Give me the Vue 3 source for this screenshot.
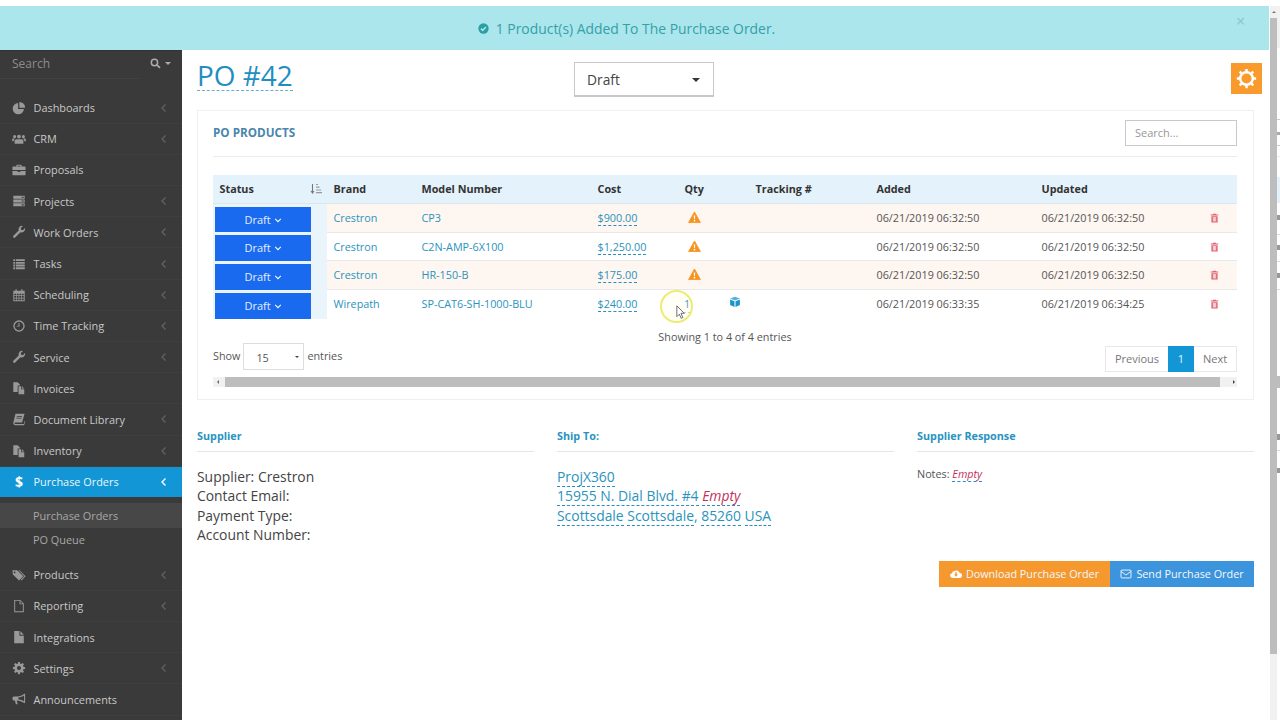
<script setup>
const icons = {
  pie: 'M7 2.4A6.4 6.4 0 1 0 13.6 9H7zM8.4 1A6.6 6.6 0 0 1 15 7.6H8.4z',
  users: 'M8 3a2.2 2.2 0 1 1 0 4.4A2.2 2.2 0 0 1 8 3zM3 3.4a1.8 1.8 0 1 1 0 3.6 1.8 1.8 0 0 1 0-3.6zM13 3.4a1.8 1.8 0 1 1 0 3.6 1.8 1.8 0 0 1 0-3.6zM5 8.2h6c1.2 0 2 .8 2 2.2V13.5H3v-3.1c0-1.4.8-2.2 2-2.2zM.2 8c0-.4.4-.6.8-.6h2.6C2.6 8 2 9 2 10.5H.2zM15.8 8c0-.4-.4-.6-.8-.6h-2.6c1 .6 1.6 1.6 1.6 3.1h1.8z',
  case: 'M5 4V2.6C5 2.2 5.4 2 5.8 2h4.4c.4 0 .8.2.8.6V4h3.5c.5 0 1 .5 1 1v3H.5V5c0-.5.5-1 1-1zM6.2 4h3.6V3H6.2zM.5 9h6v1.2h3V9h6v4c0 .5-.5 1-1 1h-13c-.5 0-1-.5-1-1z',
  server: 'M1.5 2h13v3.4h-13zM1.5 6.3h13v3.4h-13zM1.5 10.6h13V14h-13zM11 3v1.4h2.5V3zM11 7.3v1.4h2.5V7.3zM11 11.6V13h2.5v-1.4z',
  wrench: 'M15 4.5a4 4 0 0 1-5.3 3.8l-6.1 6.1a1.4 1.4 0 0 1-2-2l6.1-6.1A4 4 0 0 1 12.5 1L10 3.5l.5 2 2 .5 2.2-2.7c.2.4.3.8.3 1.2z',
  list: 'M1.5 2.5h2.2v2.2H1.5zM4.6 2.5h10v2.2h-10zM1.5 5.6h2.2v2.2H1.5zM4.6 5.6h10v2.2h-10zM1.5 8.7h2.2v2.2H1.5zM4.6 8.7h10v2.2h-10zM1.5 11.8h2.2V14H1.5zM4.6 11.8h10V14h-10z',
  calendar: 'M1.5 3H4V1.5h1.4V3h5.2V1.5H12V3h2.5v12h-13zM2.6 6.5v1.9h2.2V6.5zM5.6 6.5v1.9h2V6.5zM8.4 6.5v1.9h2V6.5zM11.2 6.5v1.9h2.2V6.5zM2.6 9.2v1.9h2.2V9.2zM5.6 9.2v1.9h2V9.2zM8.4 9.2v1.9h2V9.2zM11.2 9.2v1.9h2.2V9.2zM2.6 11.9v2h2.2v-2zM5.6 11.9v2h2v-2zM8.4 11.9v2h2v-2zM11.2 11.9v2h2.2v-2z',
  clock: 'M8 1.5a6.5 6.5 0 1 1 0 13 6.5 6.5 0 0 1 0-13zM8 3a5 5 0 1 0 0 10A5 5 0 0 0 8 3zM7.4 4.500h1.200v4.200H5.400V7.600h2z',
  files: 'M1.500 1.500h5L9 4v1.200H6.500V12.500h-5zM7.500 6h3v3.500H14V15H7.500zM11.400 6l2.600 2.600h-2.600z',
  book: 'M4 2h10.500l-.5 1.200L11.500 12H3.800c-.8 0-1 .6-.8 1s.5.6 1 .6h9.500l1-3.400.6.5-1.300 4.300H4c-1.800 0-2.800-1.300-2.500-3zM5.500 4.500v1h6v-1zM5 6.500v1h6v-1z',
  tags: 'M.5 2.500h5.400l7 7L8 14.400l-7-7zM3 4a1 1 0 1 0 0 2 1 1 0 0 0 0-2zM7.500 2.500h1l7 7-4.600 4.900-.9-.9 4-4z',
  fileo: 'M2.500 1h7l4 4v10h-11zM3.600 2.100v11.800h8.800V6H8.600V2.100zM9.700 2.400V5h2.600z',
  file: 'M2.500 1h6v5.500h5V15h-11zM9.600 1l3.900 4.400H9.600z',
  cog: 'M7 1h2l.3 2 1.200.5 1.700-1.200 1.500 1.500-1.200 1.700.5 1.200 2 .3v2l-2 .3-.5 1.200 1.200 1.700-1.500 1.500-1.700-1.200-1.200.5L9 15H7l-.3-2-1.200-.5-1.700 1.200-1.500-1.500 1.200-1.700-.5-1.200-2-.3V7l2-.3.5-1.200-1.200-1.700 1.500-1.500 1.700 1.200 1.200-.5zM8 5.700a2.300 2.300 0 1 0 0 4.600 2.300 2.300 0 0 0 0-4.600z',
  horn: 'M15 2v10.500l-1 .2C11 10.500 8 9.800 5.500 9.700l1 4.300H4.400L3.300 9.700H2.500C1.200 9.700.5 8.800.5 7.300S1.200 5 2.500 5H6c3 0 5.500-1 8-3zM13.800 4C12 5.300 9.800 6 7.400 6.100v2.600c2.400.1 4.600.8 6.400 2.100z'
}
const before = [
  ['Dashboards', 'pie', 1], ['CRM', 'users', 1], ['Proposals', 'case', 0], ['Projects', 'server', 1],
  ['Work Orders', 'wrench', 1], ['Tasks', 'list', 1], ['Scheduling', 'calendar', 1], ['Time Tracking', 'clock', 1],
  ['Service', 'wrench', 1], ['Invoices', 'files', 0], ['Document Library', 'book', 1], ['Inventory', 'files', 1]
]
const after = [
  ['Products', 'tags', 1], ['Reporting', 'fileo', 1], ['Integrations', 'file', 0], ['Settings', 'cog', 1], ['Announcements', 'horn', 0]
]
const rows = [
  { brand: 'Crestron', model: 'CP3', cost: '$900.00', added: '06/21/2019 06:32:50', updated: '06/21/2019 06:32:50', warn: true },
  { brand: 'Crestron', model: 'C2N-AMP-6X100', cost: '$1,250.00', added: '06/21/2019 06:32:50', updated: '06/21/2019 06:32:50', warn: true },
  { brand: 'Crestron', model: 'HR-150-B', cost: '$175.00', added: '06/21/2019 06:32:50', updated: '06/21/2019 06:32:50', warn: true },
  { brand: 'Wirepath', model: 'SP-CAT6-SH-1000-BLU', cost: '$240.00', added: '06/21/2019 06:33:35', updated: '06/21/2019 06:34:25', warn: false }
]
const columns = ['Brand', 'Model Number', 'Cost', 'Qty', 'Tracking #', 'Added', 'Updated', '']
// Clipped content of the page behind, visible in the last pixels at the right edge: [top, height, colour]
const edgeBits = [
  [6, 42, '#f2f2f2'], [119, 1, '#ccc'], [132, 3, '#aaa'], [145, 1, '#ccc'], [156, 1, '#eee'],
  [177, 26, '#e3f2fb'], [215, 5, '#999'], [234, 1, '#ddd'], [245, 5, '#999'], [261, 1, '#ddd'],
  [273, 5, '#999'], [289, 1, '#ddd'], [376, 12, '#bdbdbd'], [434, 6, '#999'], [450, 1, '#ddd'], [468, 5, '#999']
]
const edge = edgeBits.map((b, i) => ({
  height: b[1] + 'px',
  background: b[2],
  marginTop: b[0] - (i ? edgeBits[i - 1][0] + edgeBits[i - 1][1] : 6) + 'px'
}))
</script>

<template>
  <div class="page">
    <div class="alert">
      <svg class="alert-check" viewBox="0 0 16 16"><circle cx="8" cy="8" r="7.500" fill="#2a9fa6" /><path d="M4.400 8.200l2.500 2.500 4.600-4.800" fill="none" stroke="#aae6ec" stroke-width="2.200" /></svg>
      <span>1 Product(s) Added To The Purchase Order.</span>
      <span class="alert-close">×</span>
    </div>
    <div class="shell">
      <aside class="side">
        <div class="side-search">
          <span>Search</span>
          <span class="side-search-tools">
            <svg viewBox="0 0 16 16" class="search-ic"><circle cx="6.500" cy="6.500" r="4.600" fill="none" stroke="currentColor" stroke-width="2.200" /><path d="M10 10l4.500 4.500" stroke="currentColor" stroke-width="2.600" /></svg>
            <i class="caret-small"></i>
          </span>
        </div>
        <nav class="menu">
          <a v-for="m in before" :key="m[0]" class="item">
            <svg class="item-ic" viewBox="0 0 16 16"><path :d="icons[m[1]]" fill-rule="evenodd" /></svg>
            <span class="item-label">{{ m[0] }}</span>
            <svg v-if="m[2]" class="chev" viewBox="0 0 8 10"><path d="M5.500 1.500L2 5l3.500 3.500" fill="none" stroke="currentColor" stroke-width="1.100" /></svg>
          </a>
          <a class="item active">
            <span class="item-dollar">$</span>
            <span class="item-label">Purchase Orders</span>
            <svg class="chev" viewBox="0 0 8 10"><path d="M5.500 1.500L2 5l3.500 3.500" fill="none" stroke="currentColor" stroke-width="1.400" /></svg>
          </a>
          <div class="sub">
            <a class="sub-item current">Purchase Orders</a>
            <a class="sub-item">PO Queue</a>
          </div>
          <a v-for="m in after" :key="m[0]" class="item">
            <svg class="item-ic" viewBox="0 0 16 16"><path :d="icons[m[1]]" fill-rule="evenodd" /></svg>
            <span class="item-label">{{ m[0] }}</span>
            <svg v-if="m[2]" class="chev" viewBox="0 0 8 10"><path d="M5.500 1.500L2 5l3.500 3.500" fill="none" stroke="currentColor" stroke-width="1.100" /></svg>
          </a>
        </nav>
      </aside>

      <main class="main">
        <div class="head">
          <h1 class="title"><span class="title-text">PO #42</span></h1>
          <div class="status-select"><span>Draft</span><i class="caret"></i></div>
          <button class="gear">
            <svg viewBox="0 0 24 24">
              <g stroke="#fff" stroke-width="2.800">
                <path d="M12 1v4M12 19v4M1 12h4M19 12h4M4.200 4.200l2.900 2.900M16.900 16.900l2.900 2.900M4.200 19.800l2.900-2.900M16.900 7.100l2.900-2.900" />
              </g>
              <circle cx="12" cy="12" r="7.200" fill="none" stroke="#fff" stroke-width="2.800" />
            </svg>
          </button>
        </div>

        <section class="card">
          <div class="card-head">
            <h2>PO PRODUCTS</h2>
            <div class="search-box">Search...</div>
          </div>
          <table class="grid">
            <colgroup>
              <col class="c1" /><col class="c2" /><col class="c3" /><col class="c4" />
              <col class="c5" /><col class="c6" /><col class="c7" /><col class="c8" /><col class="c9" />
            </colgroup>
            <thead>
              <tr>
                <th class="sorted-head">
                  Status
                  <svg class="sort-ic" viewBox="0 0 12 12"><path d="M2.500 1v8.500M1 8l1.500 2L4 8" fill="none" stroke="#777" stroke-width="1.100" /><path d="M6 1.500h2M6 4.200h3.500M6 7h5M6 9.700h6" stroke="#999" stroke-width="1.200" /></svg>
                </th>
                <th v-for="c in columns" :key="c">{{ c }}</th>
              </tr>
            </thead>
            <tbody>
              <tr v-for="(r, i) in rows" :key="r.model" :class="{ odd: i % 2 === 0, tight: i === 1 }">
                <td class="status-cell"><div class="draft">Draft <svg viewBox="0 0 10 8"><path d="M1.500 2l3.500 3.500L8.500 2" fill="none" stroke="#fff" stroke-width="1.300" /></svg></div></td>
                <td class="link">{{ r.brand }}</td>
                <td class="link">{{ r.model }}</td>
                <td class="link"><span class="dash">{{ r.cost }}</span></td>
                <td class="qty">
                  <svg v-if="r.warn" class="warn" viewBox="0 0 16 16"><path d="M8 1.200l7.300 13H.7z" fill="#f5941f" stroke="#f5941f" stroke-linejoin="round" /><path d="M7.100 5.500h1.800l-.3 4.800H7.400zM7.100 11.200h1.800V13H7.100z" fill="#fff" /></svg>
                  <span v-else class="qty-num">1</span>
                </td>
                <td class="tracking">
                  <svg v-if="!r.warn" class="cube" viewBox="0 0 16 16"><path d="M8 1l6.500 2.400L8 6 1.500 3.400z" fill="#4fb4dc" /><path d="M1.500 4.700L7.300 7v7.600l-5.800-2.500z" fill="#1f93c8" /><path d="M14.500 4.700L8.700 7v7.600l5.800-2.500z" fill="#1f93c8" /></svg>
                </td>
                <td>{{ r.added }}</td>
                <td>{{ r.updated }}</td>
                <td class="del">
                  <svg viewBox="0 0 14 16"><path d="M5 1h4l1 1.500h3v1.300H1V2.500h3zM2 5h10v10H2zM4.400 6.500v7h1.200v-7zM6.400 6.500v7h1.200v-7zM8.400 6.500v7h1.200v-7z" fill="#e2606f" fill-rule="evenodd" /></svg>
                </td>
              </tr>
            </tbody>
          </table>
          <div class="info">Showing 1 to 4 of 4 entries</div>
          <div class="table-foot">
            <div class="length">
              <span class="length-text">Show</span>
              <div class="length-select"><span>15</span><i class="caret-tiny"></i></div>
              <span class="length-text">entries</span>
            </div>
            <div class="pager">
              <a class="prev">Previous</a><a class="on">1</a><a class="next">Next</a>
            </div>
          </div>
          <div class="hbar">
            <i class="arrow-left"></i>
            <div class="hbar-thumb"></div>
            <i class="arrow-right"></i>
          </div>
        </section>

        <section class="details">
          <div class="col">
            <h3>Supplier</h3>
            <p>Supplier: Crestron</p>
            <p>Contact Email:</p>
            <p>Payment Type:</p>
            <p>Account Number:</p>
          </div>
          <div class="col ship">
            <h3>Ship To:</h3>
            <p><span class="dash">ProjX360</span></p>
            <p><span class="dash">15955 N. Dial Blvd. #4</span> <span class="dash empty">Empty</span></p>
            <p><span class="dash">Scottsdale</span> <span class="dash">Scottsdale</span>, <span class="dash">85260</span> <span class="dash">USA</span></p>
          </div>
          <div class="col">
            <h3>Supplier Response</h3>
            <div class="notes">Notes: <span class="dash empty">Empty</span></div>
          </div>
        </section>

        <div class="actions">
          <button class="btn orange">
            <svg viewBox="0 0 18 14"><path d="M14.500 5.500A3.500 3.500 0 0 1 14 13H4a3.700 3.700 0 0 1-1-7.300A4 4 0 0 1 7 2.500 5 5 0 0 1 14.500 5.500zM7.900 4.500v3.300H6L9 11l3-3.200h-1.900V4.500z" fill="#fff" fill-rule="evenodd" /></svg>
            Download Purchase Order
          </button>
          <button class="btn blue">
            <svg viewBox="0 0 16 14"><rect x="1" y="1.500" width="14" height="11" rx="1.200" fill="none" stroke="#fff" stroke-width="1.200" /><path d="M1.500 3.500L8 8.500l6.500-5" fill="none" stroke="#fff" stroke-width="1.200" /></svg>
            Send Purchase Order
          </button>
        </div>
      </main>

      <div class="vbar">
        <div class="vbar-up"><i></i></div>
        <div class="vbar-thumb"></div>
      </div>
      <div class="edge">
        <div v-for="(s, i) in edge" :key="i" :style="s"></div>
      </div>
    </div>

    <div class="pointer">
      <svg viewBox="0 0 12 18"><path d="M1 1l9 9H6l2.200 5-2 1-2.200-5-3 3z" fill="#fff" stroke="#555" stroke-width="1" /></svg>
    </div>
  </div>
</template>

<style>
html, body { margin: 0; background: #fff; overflow: hidden; }
</style>

<style scoped>
.page { position: relative; width: 1280px; height: 720px; overflow: hidden; padding-top: 6px; box-sizing: border-box; font-family: "Open Sans", sans-serif; color: #555; background: #fff; }
.alert { width: 1269px; height: 44px; box-sizing: border-box; padding-right: 16px; background: #aae6ec; color: #35a0a8; display: flex; align-items: center; justify-content: center; gap: 7px; font-size: 13.900px; position: relative; }
.alert-check { width: 11px; height: 11px; }
.alert-close { position: absolute; left: 1236px; top: 4px; font-size: 16px; color: #8cc5cb; }
.shell { display: flex; height: 670px; }
.side { width: 182px; flex: none; background: #3a3a3a; color: #c8c8c8; border-top: 1px solid #333; box-sizing: border-box; }
.side-search { height: 28px; padding: 0 11px 4px 12px; box-sizing: border-box; display: flex; justify-content: space-between; align-items: center; font-size: 12px; color: #8d8d8d; background: linear-gradient(#414141, #414141) no-repeat 0 100% / 140px 1px; }
.side-search-tools { display: flex; align-items: center; gap: 4px; color: #aaa; }
.search-ic { width: 11px; height: 11px; }
.caret-small { border: 3px solid transparent; border-top-color: #aaa; border-bottom: 0; }
.menu { margin-top: 13.500px; }
.item { height: 31.200px; display: flex; align-items: center; padding: 0 14px 0 12px; box-sizing: border-box; font-size: 10.900px; border-bottom: 1px solid #3f3f3f; }
.item-ic { width: 14px; height: 14px; fill: #999; flex: none; }
.item-label { margin-left: 7.500px; flex: 1; }
.chev { width: 8px; height: 10px; color: #666; flex: none; }
.active { height: 30.400px; background: #1296d5; color: #e8f6fc; border: 0; }
.active .chev { color: #fff; }
.item-dollar { width: 14px; text-align: center; font-weight: 700; font-size: 14px; color: #fff; }
.sub { padding: 6px 0 7px; height: 62.500px; box-sizing: border-box; }
.sub-item { display: flex; align-items: center; height: 24.500px; padding-left: 33px; font-size: 10.900px; color: #a8a8a8; }
.current { background: #474747; }
.main { width: 1088px; flex: none; padding: 0 16px 0 15px; box-sizing: border-box; }
.head { height: 60px; display: flex; align-items: flex-start; }
.title { margin: 10.500px 0 0; width: 377px; height: 30px; font-size: 27.900px; line-height: 29px; font-weight: 400; color: #1f8fc0; }
.title-text { display: inline-block; border-bottom: 1px dashed #6aaad4; }
.dash { border-bottom: 1px dashed #2a8fc0; }
.status-select { margin-top: 12px; width: 140px; height: 35px; box-sizing: border-box; border: 1px solid #c8c8c8; border-bottom-width: 2px; padding: 1px 13px 0 12px; display: flex; align-items: center; justify-content: space-between; font-size: 13.800px; color: #444; }
.caret { border: 4px solid transparent; border-top-color: #333; border-bottom: 0; }
.gear { margin: 13px -8px 0 auto; width: 31px; height: 31px; background: #f89a2c; border: 0; padding: 5px; display: flex; }
.gear svg { width: 21px; height: 21px; }
.card { height: 290px; border: 1px solid #f0f0f0; box-sizing: border-box; padding: 0 16px 0 15px; }
.card-head { height: 46px; border-bottom: 1px solid #ececec; display: flex; justify-content: space-between; align-items: flex-start; box-sizing: border-box; }
.card-head h2 { margin: 13px 0 0; font-size: 11.700px; font-weight: 700; color: #4a85ad; }
.search-box { margin-top: 9px; width: 112px; height: 26px; box-sizing: border-box; border: 1px solid #c9c9c9; padding: 0 9px; font-size: 11px; line-height: 24px; color: #999; }
.grid { margin-top: 18px; width: 1024px; table-layout: fixed; border-collapse: collapse; font-size: 10.800px; }
.c1 { width: 114px; } .c2 { width: 88px; } .c3 { width: 176px; } .c4 { width: 87px; } .c5 { width: 71px; }
.c6 { width: 121px; } .c7 { width: 165px; } .c8 { width: 160px; } .c9 { width: 42px; }
.grid th { height: 28px; background: #e3f2fb; color: #333; font-weight: 700; text-align: left; padding: 0 6px 0 6.500px; font-size: 10.800px; border-bottom: 1px solid #dde6ec; box-sizing: border-box; }
.sorted-head { position: relative; }
.sort-ic { position: absolute; right: 5px; top: 8px; width: 12px; height: 12px; }
.grid td { height: 29px; padding: 0 6px 0 6.500px; border-bottom: 1px solid #e9e9e9; box-sizing: border-box; vertical-align: top; line-height: 27.500px; }
.grid .tight td { height: 28px; }
.grid tbody tr:last-child td { border-bottom: 0; }
.odd td { background: #fef6f0; }
.grid td.status-cell { background: #eaf4fb; padding: 3px 16px 0 2px; border-bottom: 0; }
.draft { height: 26px; margin-bottom: -3px; background: #1a6af0; color: #e4eeff; text-align: center; font-size: 11px; line-height: 26px; }
.draft svg { width: 8px; height: 7px; }
.link { color: #2a93bd; }
.warn { width: 13px; height: 13px; margin: 7px 0 0 3.500px; display: block; }
.qty-num { color: #2a93bd; display: block; width: 8px; margin: 6px 0 0 -1.500px; line-height: 16px; text-align: center; border-bottom: 1px dashed #a9cde0; }
.cube { width: 12px; height: 12px; display: block; margin: 6px 0 0 -26.500px; }
.del svg { width: 9px; height: 10px; display: block; margin: 9px 0 0 8.500px; }
.info { text-align: center; font-size: 10.800px; margin-top: 11px; line-height: 14px; }
.table-foot { display: flex; justify-content: space-between; align-items: flex-start; height: 26px; margin-top: 2px; }
.length { display: flex; align-items: center; gap: 3px; font-size: 10.800px; margin-top: -3px; }
.length-text { margin-bottom: 2px; }
.length-select { width: 61px; height: 27px; box-sizing: border-box; border: 1px solid #ddd; display: flex; justify-content: space-between; align-items: center; padding: 2px 4px 0 12px; }
.caret-tiny { border: 2.500px solid transparent; border-top-color: #444; border-bottom: 0; }
.pager { display: flex; height: 26px; width: 132px; border: 1px solid #e8e8e8; box-sizing: border-box; font-size: 11px; color: #777; line-height: 24px; }
.prev { width: 62px; text-align: center; }
.next { width: 42px; text-align: center; }
.pager .on { width: 26px; text-align: center; background: #1296d5; color: #e8f6fc; line-height: 26px; margin-top: -1px; height: 26px; }
.hbar { margin-top: 5px; height: 10px; background: #f1f1f1; display: flex; align-items: center; }
.hbar-thumb { width: 995px; height: 10px; background: #bdbdbd; margin-right: 13px; }
.arrow-left { margin: 0 6px 0 4px; border: 2.500px solid transparent; border-right-color: #666; border-left: 0; }
.arrow-right { border: 2.500px solid transparent; border-left-color: #444; border-right: 0; }
.details { display: grid; grid-template-columns: repeat(3, 337px); column-gap: 23px; margin-top: 27.500px; }
.col h3 { margin: 0 0 15px; height: 24px; box-sizing: border-box; font-size: 10.800px; line-height: 15px; font-weight: 700; color: #2a93c0; border-bottom: 1px solid #e5e5e5; }
.col p { margin: 0; font-size: 13.900px; line-height: 19.600px; color: #444; white-space: nowrap; }
.ship p { color: #2a93bd; }
.empty { color: #c2305a; font-style: italic; }
.notes { font-size: 10.800px; color: #555; margin-top: -1px; }
.actions { margin-top: 16px; display: flex; justify-content: flex-end; }
.btn { height: 26px; border: 0; color: #f4f8fb; font-family: inherit; font-size: 10.800px; padding: 0; display: flex; align-items: center; justify-content: center; gap: 4px; }
.btn svg { width: 12px; height: 10px; }
.orange { width: 171px; background: #f5992f; }
.blue { width: 144px; background: #3b94dc; }
.vbar { width: 7px; flex: none; margin-top: -44px; height: 714px; background: #f1f1f1; display: flex; flex-direction: column; }
.vbar-up { height: 12px; flex: none; display: flex; align-items: center; justify-content: center; }
.vbar-up i { border: 2.500px solid transparent; border-bottom-color: #777; border-top: 0; }
.vbar-thumb { height: 636px; background: #bdbdbd; }
.edge { width: 3px; flex: none; margin-top: -44px; height: 714px; display: flex; flex-direction: column; }
.pointer { position: absolute; left: 660px; top: 290px; width: 33px; height: 33px; border: 2px solid #eeec70; border-radius: 50%; box-sizing: border-box; background: rgba(255, 255, 190, .12); }
.pointer svg { position: absolute; left: 14px; top: 13px; width: 10px; height: 15px; }
</style>
